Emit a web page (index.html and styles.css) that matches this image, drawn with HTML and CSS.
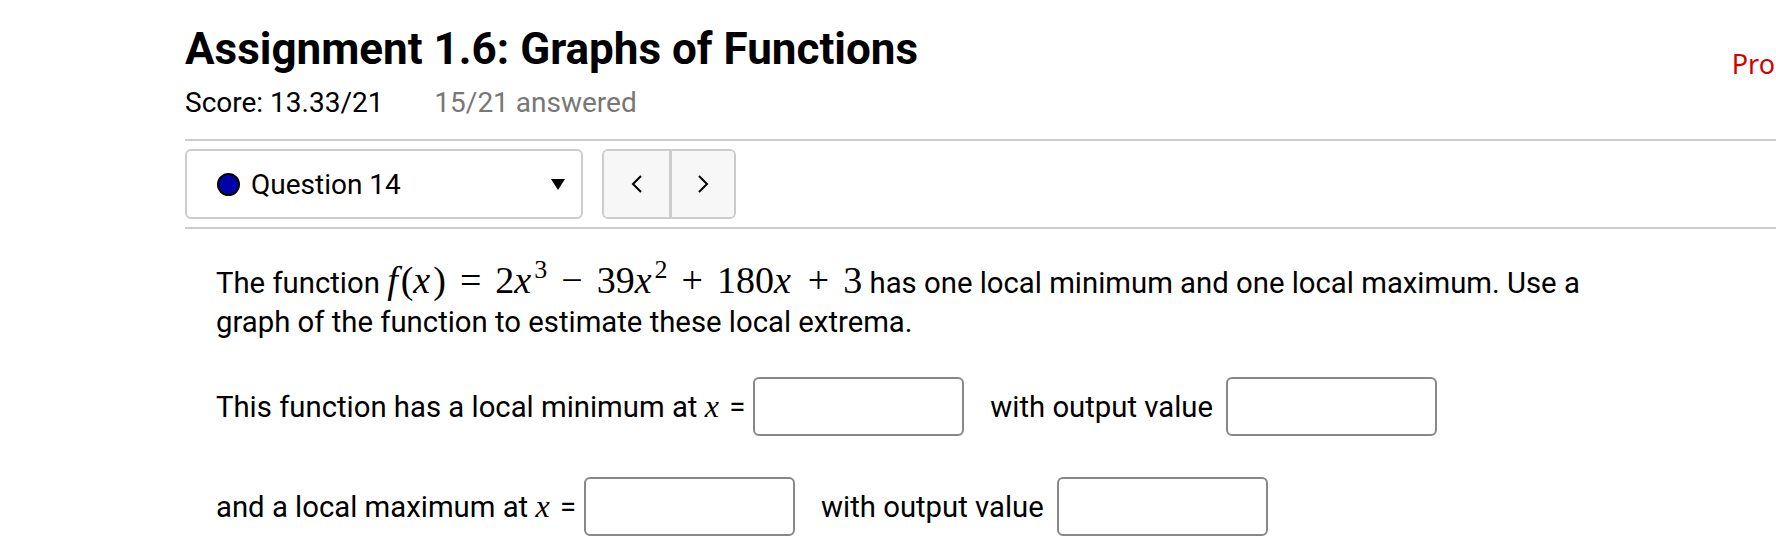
FILE: index.html
```html
<!DOCTYPE html>
<html lang="en">

<head>
    <meta charset="UTF-8" />
    <title>Assignment 1.6: Graphs of Functions</title>
    <link rel="stylesheet" href="styles.css">
</head>

<body>
    <div class="page">
        <!-- 头部 -->
        <div class="header">
            <div>
                <h1 class="title">Assignment 1.6: Graphs of Functions</h1>
                <div class="score">
                    <span>Score: 13.33/21</span>
                    <span class="answered">15/21 answered</span>
                </div>
            </div>
            <span class="pro">Pro</span>
        </div>

        <!-- 题目导航 -->
        <div class="nav">
            <div class="select">
                <span class="dot"></span>
                <span class="qname">Question 14</span>
                <span class="caret"></span>
            </div>
            <div class="arrows">
                <button class="arrow">
                    <svg width="14" height="20" viewBox="0 0 14 20"><path d="M11 2 L3 10 L11 18" fill="none" stroke="#000" stroke-width="2"/></svg>
                </button>
                <button class="arrow">
                    <svg width="14" height="20" viewBox="0 0 14 20"><path d="M3 2 L11 10 L3 18" fill="none" stroke="#000" stroke-width="2"/></svg>
                </button>
            </div>
        </div>

        <!-- 题目内容 -->
        <div class="question">
            <p class="text">The function <span class="math big"><i>f</i>(<i>x</i>)<span class="op">=</span>2<i>x</i><sup>3</sup><span class="op">&minus;</span>39<i>x</i><sup>2</sup><span class="op">+</span>180<i>x</i><span class="op">+</span>3</span> has one local minimum and one local maximum. Use a graph of the function to estimate these local extrema.</p>

            <div class="row">
                <span>This function has a local minimum at <span class="math"><i>x</i></span> =</span>
                <input class="box" type="text" />
                <span class="gap">with output value</span>
                <input class="box" type="text" />
            </div>

            <div class="row">
                <span>and a local maximum at <span class="math"><i>x</i></span> =</span>
                <input class="box" type="text" />
                <span class="gap">with output value</span>
                <input class="box" type="text" />
            </div>
        </div>
    </div>
</body>

</html>
```

FILE: styles.css
```css
* {
    margin: 0;
    padding: 0;
    box-sizing: border-box;
}

body {
    font-family: Roboto, "Liberation Sans", sans-serif;
    color: #000;
    overflow: hidden;
}

.page {
    width: 1600px;
    margin-left: 185px;
}

.header {
    display: flex;
    justify-content: space-between;
    align-items: flex-start;
    padding-top: 22px;
}

.title {
    font-size: 44px;
    font-weight: bold;
    line-height: 54px;
}

.score {
    font-size: 28px;
    line-height: 38px;
    margin-top: 8px;
}

.score .answered {
    color: #777;
    margin-left: 44px;
}

.pro {
    color: #d40000;
    font-family: "Noto Sans", sans-serif;
    font-size: 27px;
    margin-top: 23px;
    margin-right: 10px;
}

.nav {
    display: flex;
    gap: 19px;
    margin-top: 17px;
    padding: 8px 0;
    border-top: 2px solid #ccc;
    border-bottom: 2px solid #ccc;
}

.select {
    width: 398px;
    height: 70px;
    border: 2px solid #ccc;
    border-radius: 6px;
    display: flex;
    align-items: center;
    padding-left: 30px;
    padding-right: 16px;
    font-size: 28px;
}

.dot {
    width: 23px;
    height: 23px;
    border-radius: 50%;
    background: #0000aa;
    border: 2px solid #000;
    margin-right: 11px;
}

.qname {
    flex: 1;
}

.caret {
    width: 0;
    height: 0;
    border-left: 7px solid transparent;
    border-right: 7px solid transparent;
    border-top: 11px solid #000;
}

.arrows {
    display: flex;
    height: 70px;
    border: 2px solid #ccc;
    border-radius: 6px;
    overflow: hidden;
}

.arrow {
    width: 65px;
    border: none;
    background: #f7f7f7;
    display: flex;
    align-items: center;
    justify-content: center;
}

.arrow + .arrow {
    border-left: 3px solid #ccc;
}

.question {
    padding-left: 31px;
    padding-top: 35px;
    font-size: 29.3px;
}

.text {
    width: 1380px;
    line-height: 39px;
}

.math {
    font-family: "Liberation Serif", "DejaVu Serif", serif;
    font-size: 32px;
    line-height: 0;
}

.math.big {
    font-size: 38px;
}

.math i {
    font-style: italic;
    padding-right: 3px;
}

.math sup {
    font-size: 26px;
    vertical-align: 15px;
    line-height: 0;
}

.math .op {
    margin: 0 14px;
}

.row {
    display: flex;
    align-items: center;
    margin-top: 35px;
}

.row + .row {
    margin-top: 41px;
}

.box {
    width: 211px;
    height: 59px;
    border: 2px solid #888;
    border-radius: 6px;
    margin-left: 8px;
    background: #fff;
}

.row .gap {
    margin-left: 26px;
    margin-right: 5px;
}
```
